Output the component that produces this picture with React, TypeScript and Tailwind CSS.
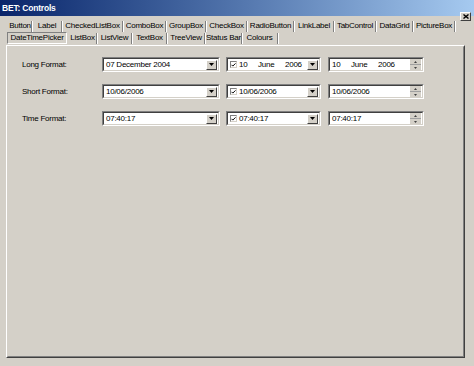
import React from 'react';

const row1 = [
  ['Button', 24],
  ['Label', 30],
  ['CheckedListBox', 61],
  ['ComboBox', 43],
  ['GroupBox', 40],
  ['CheckBox', 41],
  ['RadioButton', 47],
  ['LinkLabel', 40],
  ['TabControl', 42],
  ['DataGrid', 37],
  ['PictureBox', 42],
] as const;

const row2 = [
  ['ListBox', 29],
  ['ListView', 35],
  ['TextBox', 35],
  ['TreeView', 38],
  ['Status Bar', 36],
  ['Colours', 37],
] as const;

function Tab({ label, width }: { label: string; width: number }) {
  return (
    <div className="flex items-center h-full" style={{ width }}>
      <span className="flex-1 text-center whitespace-nowrap">{label}</span>
      <span className="w-[2px] h-[11px] border-l border-l-[#808080] border-r border-r-white" />
    </div>
  );
}

function Arrow() {
  return (
    <svg width="5" height="3" viewBox="0 0 5 3">
      <path d="M0 0h5L2.5 3z" fill="#000" />
    </svg>
  );
}

function Field({ width, children }: { width: number; children: React.ReactNode }) {
  return (
    <div className="h-[15px] border border-t-[#808080] border-l-[#808080] border-b-white border-r-white" style={{ width }}>
      <div className="h-full border border-t-[#404040] border-l-[#404040] border-b-[#d4d0c8] border-r-[#d4d0c8] bg-white flex items-center pl-[2px] pr-[1px]">
        {children}
      </div>
    </div>
  );
}

function DropButton() {
  return (
    <div className="ml-auto w-[11px] h-[10px] bg-[#d4d0c8] border border-t-white border-l-white border-b-[#404040] border-r-[#404040] flex items-center justify-center">
      <Arrow />
    </div>
  );
}

function Spinner() {
  return (
    <div className="ml-auto w-[11px] h-[11px] flex flex-col bg-[#d4d0c8]">
      <div className="flex-1 flex items-center justify-center border-b border-b-[#a0a0a0]">
        <svg width="3" height="2" viewBox="0 0 3 2"><path d="M0 2h3L1.5 0z" fill="#404040" /></svg>
      </div>
      <div className="flex-1 flex items-center justify-center">
        <svg width="3" height="2" viewBox="0 0 3 2"><path d="M0 0h3L1.5 2z" fill="#404040" /></svg>
      </div>
    </div>
  );
}

function Check() {
  return (
    <div className="w-[7px] h-[7px] mr-[2px] border border-t-[#808080] border-l-[#808080] border-b-[#d4d0c8] border-r-[#d4d0c8] flex items-center justify-center">
      <svg width="5" height="4" viewBox="0 0 5 4">
        <path d="M0.5 1.8l1.3 1.3L4.5 0.4" stroke="#000" strokeWidth="1" fill="none" />
      </svg>
    </div>
  );
}

function LongDate() {
  return (
    <span className="flex whitespace-nowrap">
      <span className="w-[19px]">10</span>
      <span className="w-[27px]">June</span>
      <span>2006</span>
    </span>
  );
}

function Row({ label, value, alt }: { label: string; value: string; alt?: boolean }) {
  return (
    <div className="flex items-center h-[15px]">
      <span className="w-[80px] whitespace-nowrap">{label}</span>
      <Field width={118}>
        <span className="whitespace-nowrap">{value}</span>
        <DropButton />
      </Field>
      <div className="w-[6px]" />
      <Field width={95}>
        <Check />
        {alt ? <LongDate /> : <span className="whitespace-nowrap">{label.startsWith('Short') ? '10/06/2006' : '07:40:17'}</span>}
        <DropButton />
      </Field>
      <div className="w-[7px]" />
      <Field width={96}>
        {alt ? <LongDate /> : <span className="whitespace-nowrap">{label.startsWith('Short') ? '10/06/2006' : '07:40:17'}</span>}
        <Spinner />
      </Field>
    </div>
  );
}

export default function App() {
  return (
    <div className="relative w-[474px] h-[366px] bg-[#d4d0c8] flex flex-col text-[8px] tracking-[-0.25px] text-black font-['Tahoma','Liberation_Sans',sans-serif]">
      <div className="h-[16px] shrink-0 bg-gradient-to-r from-[#0a246a] to-[#a6caf0] flex items-center px-[2px]">
        <span className="text-white font-bold text-[8.5px] tracking-[-0.2px]">BET: Controls</span>
      </div>
      <div className="absolute right-[3px] top-[12px] w-[11px] h-[9px] bg-[#d4d0c8] border border-t-white border-l-white border-b-[#404040] border-r-[#404040] flex items-center justify-center">
        <svg width="6" height="5" viewBox="0 0 6 5">
          <path d="M0.5 0.5l5 4M5.5 0.5l-5 4" stroke="#000" strokeWidth="1.4" />
        </svg>
      </div>

      <div className="flex h-[12px] mt-[4px] pl-[9px] shrink-0">
        {row1.map(([l, w]) => (
          <Tab key={l} label={l} width={w} />
        ))}
      </div>
      <div className="flex h-[12px] pl-[7px] shrink-0">
        <div className="w-[60px] h-full flex items-center justify-center border border-t-[#808080] border-l-[#808080] border-b-white border-r-white bg-[#d4d0c8]">
          DateTimePicker
        </div>
        <div className="w-[2px]" />
        {row2.map(([l, w]) => (
          <Tab key={l} label={l} width={w} />
        ))}
      </div>

      <div className="flex-1 mt-[1px] mb-[8px] ml-[6px] mr-[9px] border border-t-white border-l-white border-b-[#404040] border-r-[#404040]">
        <div className="h-full border border-t-[#d4d0c8] border-l-[#d4d0c8] border-b-[#808080] border-r-[#808080] pt-[10px] pl-[14px] flex flex-col gap-[12px]">
          <Row label="Long Format:" value="07 December 2004" alt />
          <Row label="Short Format:" value="10/06/2006" />
          <Row label="Time Format:" value="07:40:17" />
        </div>
      </div>
    </div>
  );
}
